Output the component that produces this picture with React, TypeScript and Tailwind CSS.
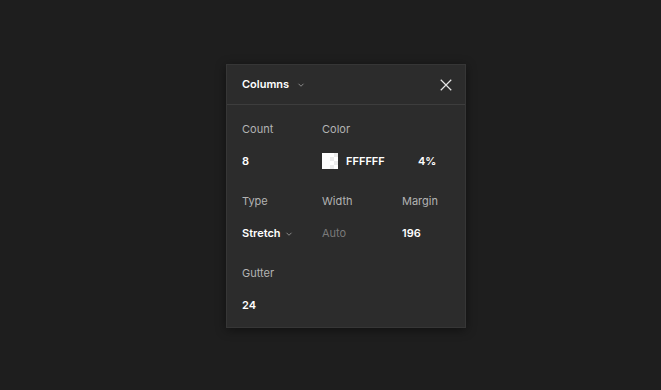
function Chevron({ gap }: { gap: string }) {
  return (
    <svg width="8" height="8" viewBox="0 0 8 8" className={`${gap} mt-[1px]`}>
      <path d="M1.5 2.75 L4 5.25 L6.5 2.75" fill="none" stroke="#8a8a8a" strokeWidth="1" />
    </svg>
  );
}

function Label({ children }: { children: React.ReactNode }) {
  return <div className="flex h-8 items-center text-[#b3b3b3]">{children}</div>;
}

export default function App() {
  return (
    <div className="min-h-[390px] w-full bg-[#1e1e1e] pl-[226px] pt-[64px] font-['Inter',sans-serif] text-[11px]">
      <div className="w-[240px] border border-[#363636] bg-[#2c2c2c] shadow-[0_2px_10px_rgba(0,0,0,0.45)]">
        <div className="flex h-10 items-center justify-between border-b border-[#3d3d3d] pl-[15px] pr-[13px]">
          <div className="flex items-center font-semibold text-white">
            Columns
            <Chevron gap="ml-[8px]" />
          </div>
          <svg width="12" height="12" viewBox="0 0 12 12">
            <path d="M0.75 0.75 L11.25 11.25 M11.25 0.75 L0.75 11.25" stroke="#e6e6e6" strokeWidth="1.2" />
          </svg>
        </div>
        <div className="flex flex-col gap-2 pb-[6px] pl-[15px] pt-2">
          <div className="grid grid-cols-[80px_80px_80px]">
            <Label>Count</Label>
            <Label>Color</Label>
            <div />
            <div className="flex h-8 items-center font-semibold text-white">8</div>
            <div className="col-span-2 flex h-8 items-center font-semibold text-white">
              <div className="grid h-4 w-4 grid-cols-4 grid-rows-4 bg-white">
                <div /><div /><div /><div className="bg-[#ececec]" />
                <div /><div /><div className="bg-[#ececec]" /><div />
                <div /><div /><div /><div className="bg-[#ececec]" />
                <div /><div /><div className="bg-[#ececec]" /><div />
              </div>
              <span className="ml-2 w-[72px]">FFFFFF</span>
              <span>4%</span>
            </div>
          </div>
          <div className="grid grid-cols-[80px_80px_80px]">
            <Label>Type</Label>
            <Label>Width</Label>
            <Label>Margin</Label>
            <div className="flex h-8 items-center font-semibold text-white">
              Stretch
              <Chevron gap="ml-[4px]" />
            </div>
            <div className="flex h-8 items-center text-[#7a7a7a]">Auto</div>
            <div className="flex h-8 items-center font-semibold text-white">196</div>
          </div>
          <div className="grid grid-cols-[80px_80px_80px]">
            <Label>Gutter</Label>
            <div />
            <div />
            <div className="flex h-8 items-center font-semibold text-white">24</div>
          </div>
        </div>
      </div>
    </div>
  );
}
